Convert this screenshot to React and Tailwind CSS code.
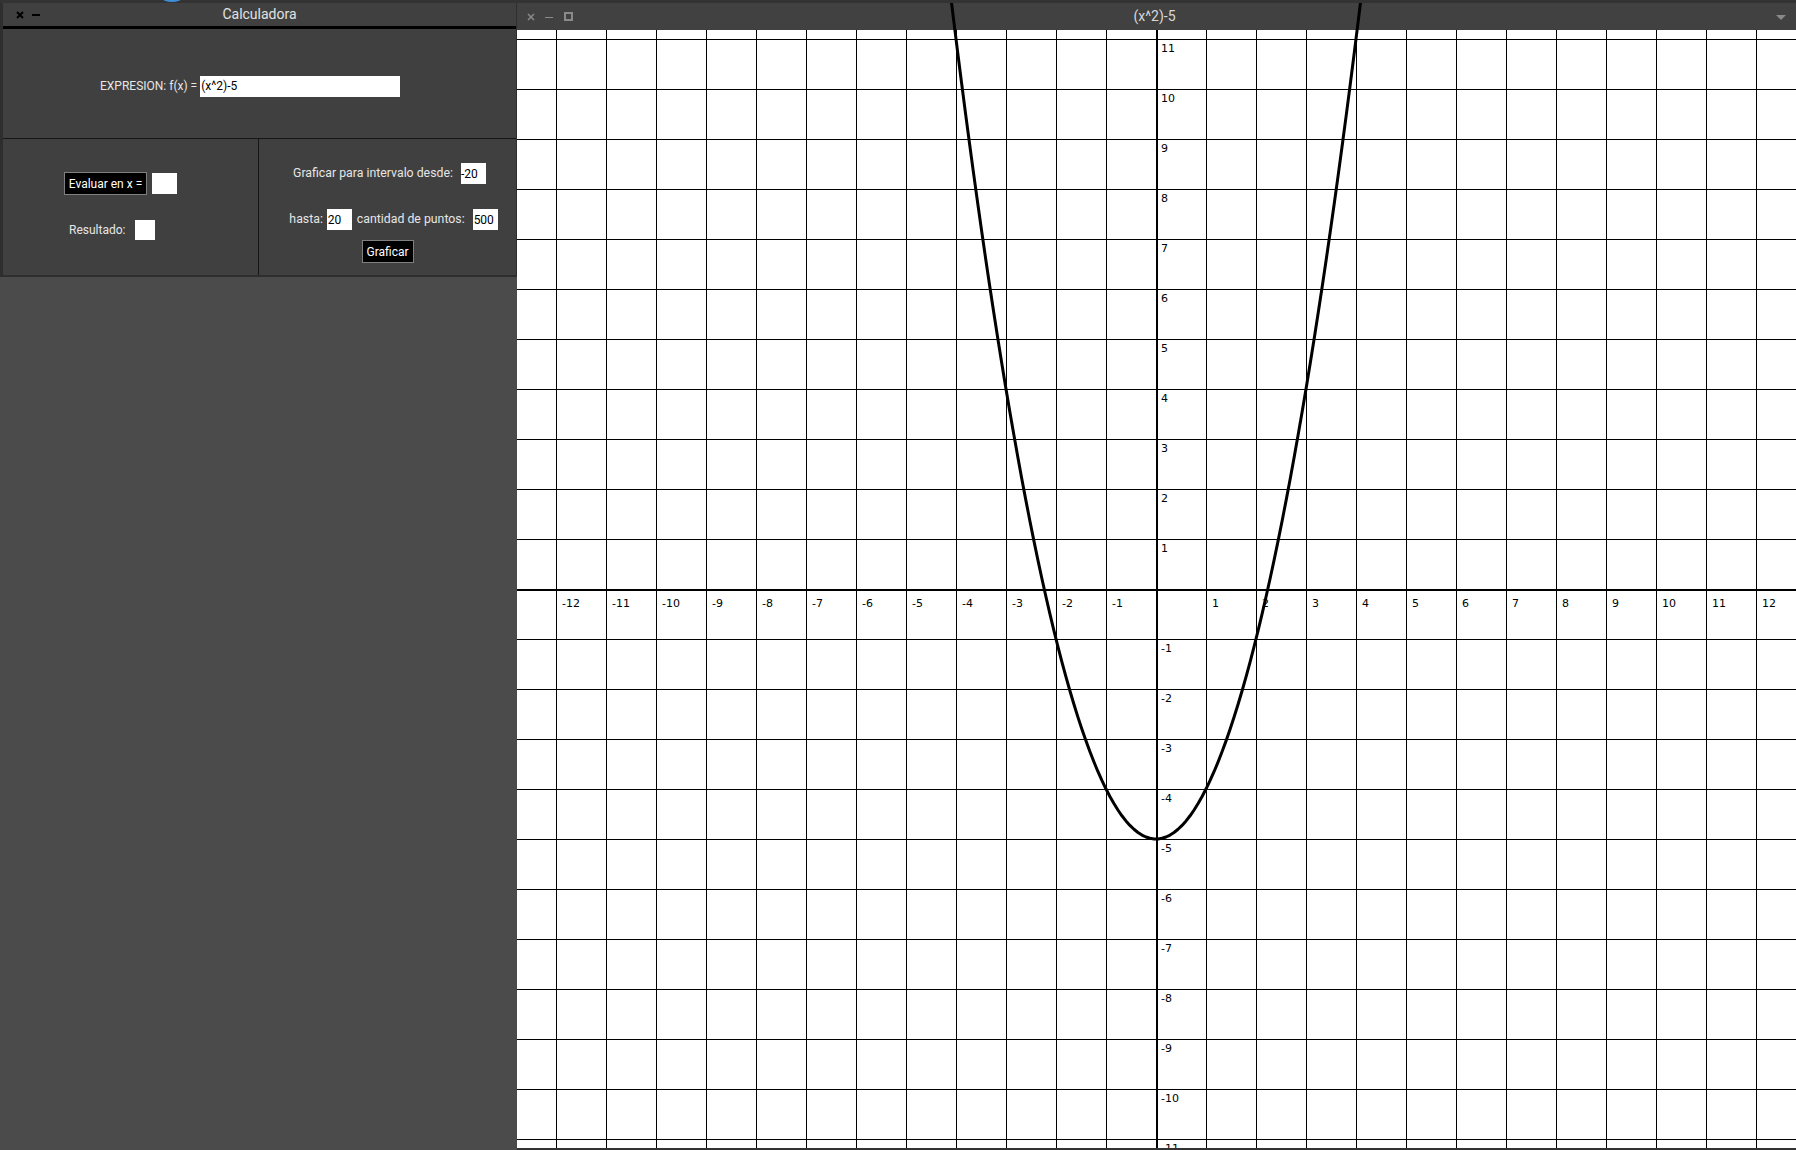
import React from "react";

const GW = 1279;
const GH = 1118;
const OX = 639; // y axis, relative to graph left
const OY = 559; // x axis, relative to graph top
const U = 50;
const TOP = 27; // la curva se dibuja sobre la barra de titulo

const xTicks = [];
for (let k = -12; k <= 12; k++) xTicks.push(k);
const yTicks = [];
for (let k = -11; k <= 11; k++) yTicks.push(k);

// f(x) = (x^2)-5, desde -20 hasta 20, 500 puntos
const curve = (() => {
  const pts = [];
  for (let i = 0; i < 500; i++) {
    const x = -20 + (40 * i) / 499;
    const y = x * x - 5;
    pts.push(`${(OX + U * x).toFixed(2)},${(TOP + OY - U * y).toFixed(2)}`);
  }
  return "M" + pts.join(" L");
})();

const Grid = () => {
  return (
    <svg width={GW} height={GH} className="block">
      {xTicks.map((k) => (
        <line
          key={"v" + k}
          x1={OX + U * k + 0.5}
          x2={OX + U * k + 0.5}
          y1="0"
          y2={GH}
          stroke="#000"
          strokeWidth={k === 0 ? 2 : 1}
          shapeRendering="crispEdges"
        />
      ))}
      {yTicks.map((k) => (
        <line
          key={"h" + k}
          x1="0"
          x2={GW}
          y1={OY - U * k + 0.5}
          y2={OY - U * k + 0.5}
          stroke="#000"
          strokeWidth={k === 0 ? 2 : 1}
          shapeRendering="crispEdges"
        />
      ))}

      {xTicks
        .filter((k) => k !== 0)
        .map((k) => (
          <text
            key={"xl" + k}
            x={OX + U * k + 6}
            y={OY + 18}
            fontSize="11"
            fontFamily="DejaVu Sans, sans-serif"
            fill="#000"
          >
            {k}
          </text>
        ))}
      {yTicks
        .filter((k) => k !== 0)
        .map((k) => (
          <text
            key={"yl" + k}
            x={OX + 5}
            y={OY - U * k + 13}
            fontSize="11"
            fontFamily="DejaVu Sans, sans-serif"
            fill="#000"
          >
            {k}
          </text>
        ))}
    </svg>
  );
};

const App = () => {
  return (
    <div className="w-[1796px] h-[1150px] bg-[#4b4b4b] flex flex-col overflow-hidden relative font-[Roboto,sans-serif]">
      {/* top strip */}
      <div className="h-[3px] bg-[#333333] relative">
        <div className="absolute left-[152px] top-[-38px] w-[40px] h-[40px] rounded-full bg-[#3d8fd8]" />
      </div>

      <div className="flex flex-1">
        {/* Calculadora */}
        <div className="w-[517px] flex flex-col">
          <div className="border-l-[3px] border-r border-b-2 border-[#2e2e2e] bg-[#404040] flex flex-col">
            <div className="h-[23px] relative flex items-center justify-center">
              <svg width="8" height="8" className="absolute left-[13px] top-[8px]">
                <path d="M1 1 L7 7 M7 1 L1 7" stroke="#000" strokeWidth="2" />
              </svg>
              <div className="absolute left-[29px] top-[11px] w-[8px] h-[2px] bg-black" />
              <span className="text-[14px] text-[#e2e2e2]">Calculadora</span>
            </div>
            <div className="h-[3px] bg-black" />

            <div className="h-[110px] flex items-center pl-[97px] pt-[5px] border-b border-[#151515]">
              <span className="text-[12px] text-[#e6e6e6] mr-[3px]">EXPRESION: f(x) =</span>
              <div className="w-[200px] h-[21px] bg-white text-[12px] text-black flex items-center pl-[1px]">
                (x^2)-5
              </div>
            </div>

            <div className="flex h-[136px]">
              {/* evaluar */}
              <div className="w-[256px] border-r border-[#151515] flex flex-col pt-[33px]">
                <div className="flex items-center pl-[61px] gap-[5px]">
                  <div className="w-[83px] h-[23px] bg-black border border-[#808080] text-[12px] text-white flex items-center justify-center">
                    Evaluar en x =
                  </div>
                  <div className="w-[25px] h-[21px] bg-white" />
                </div>
                <div className="flex items-center pl-[66px] mt-[25px]">
                  <span className="text-[12px] text-[#e6e6e6] w-[66px]">Resultado:</span>
                  <div className="w-[20px] h-[20px] bg-white" />
                </div>
              </div>

              {/* graficar */}
              <div className="flex-1 flex flex-col items-center pt-[24px]">
                <div className="flex items-center ml-[4px]">
                  <span className="text-[12.3px] text-[#e6e6e6] mr-[8px]">Graficar para intervalo desde:</span>
                  <div className="w-[25px] h-[21px] bg-white text-[12px] text-black flex items-center">-20</div>
                </div>
                <div className="flex items-center mt-[25px] ml-[12px]">
                  <span className="text-[12.3px] text-[#e6e6e6] mr-[4px]">hasta:</span>
                  <div className="w-[25px] h-[21px] bg-white text-[12px] text-black flex items-center pl-[1px]">20</div>
                  <span className="text-[12.3px] text-[#e6e6e6] ml-[5px] mr-[8px]">cantidad de puntos:</span>
                  <div className="w-[25px] h-[21px] bg-white text-[12px] text-black flex items-center pl-[1px]">500</div>
                </div>
                <div className="mt-[10px] w-[52px] h-[23px] bg-black border border-[#808080] text-[12px] text-white flex items-center justify-center">
                  Graficar
                </div>
              </div>
            </div>
          </div>
        </div>

        {/* Grafica */}
        <div className="flex-1 flex flex-col relative">
          <div className="h-[27px] bg-[#414141] relative flex items-center justify-center">
            <svg width="8" height="8" className="absolute left-[10px] top-[10px]">
              <path d="M1 1 L7 7 M7 1 L1 7" stroke="#8a8a8a" strokeWidth="1.5" />
            </svg>
            <div className="absolute left-[28px] top-[14px] w-[8px] h-[1px] bg-[#8a8a8a]" />
            <div className="absolute left-[47px] top-[9px] w-[9px] h-[9px] border-2 border-[#8a8a8a]" />
            <span className="text-[14px] text-[#d8d8d8] pr-[4px]">(x^2)-5</span>
            <svg width="10" height="6" className="absolute right-[10px] top-[12px]">
              <path d="M0 0 L10 0 L5 5 Z" fill="#8a8a8a" />
            </svg>
          </div>
          <div className="h-[1118px] bg-white">
            <Grid />
          </div>
          <div className="flex-1 bg-[#333333]" />

          {/* curva, pasa por encima de la barra de titulo */}
          <svg width={GW} height={GH + TOP} className="absolute left-0 top-0 pointer-events-none">
            <path d={curve} fill="none" stroke="#000" strokeWidth="3" strokeLinejoin="round" />
          </svg>
        </div>
      </div>
    </div>
  );
};

export default App;
